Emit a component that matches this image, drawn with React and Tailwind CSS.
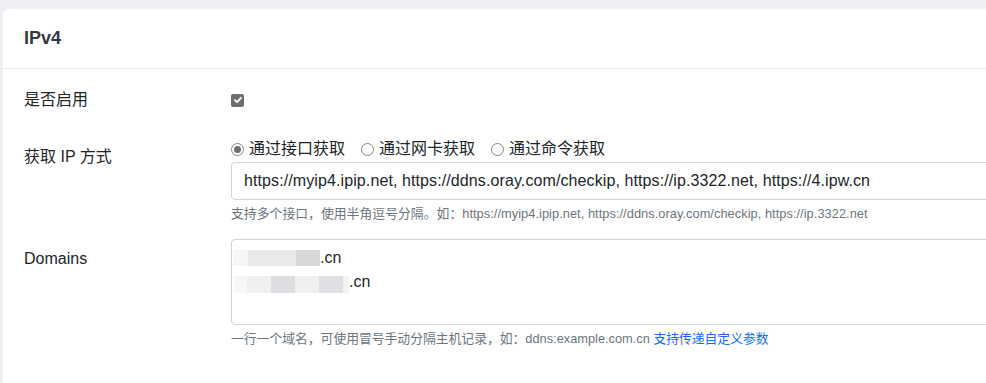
import React from "react";

function Radio({ checked, label }) {
  return (
    <label className="flex items-center">
      <span className="w-[13px] h-[13px] rounded-full border border-[#858585] bg-white flex items-center justify-center">
        {checked && <span className="w-[7px] h-[7px] rounded-full bg-[#6f6f6f]" />}
      </span>
      <span className="ml-[5px]">{label}</span>
    </label>
  );
}

function Block({ w, c }) {
  return <span className={`inline-block h-full ${w} ${c}`} />;
}

export default function App() {
  return (
    <div className="w-[986px] h-[383px] overflow-hidden bg-[#eef0f5] pt-[9px] pl-[3px] font-['Liberation_Sans','Noto_Sans_CJK_SC',sans-serif] text-[16px] text-[#212529]">
      <div className="w-[1200px] h-[400px] bg-white rounded-tl-md">
        <div className="h-[60px] flex items-center px-[21px] border-b border-[#e6e8ee]">
          <span className="text-[18px] font-semibold text-[#343a40]">IPv4</span>
        </div>
        <div className="px-[21px] pt-[11px]">
          {/* Row 1 */}
          <div className="flex">
            <div className="w-[207px] shrink-0 pt-2 leading-6">是否启用</div>
            <div className="pt-2">
              <div className="h-6 flex items-center">
                <span className="w-[13px] h-[13px] rounded-[2px] bg-[#6e6e6e] flex items-center justify-center">
                  <svg width="10" height="10" viewBox="0 0 10 10">
                    <path d="M2 5.2 L4.1 7.2 L8 2.8" fill="none" stroke="white" strokeWidth="1.8" strokeLinecap="round" strokeLinejoin="round" />
                  </svg>
                </span>
              </div>
            </div>
          </div>

          {/* Row 2 */}
          <div className="flex mt-[25px]">
            <div className="w-[207px] shrink-0 pt-2 leading-6">获取 IP 方式</div>
            <div className="flex-1">
              <div className="h-6 flex items-center gap-4 leading-6">
                <Radio checked label="通过接口获取" />
                <Radio label="通过网卡获取" />
                <Radio label="通过命令获取" />
              </div>
              <div className="mt-px h-[38px] border border-[#ced4da] rounded-l-[4px] px-3 leading-[36px] whitespace-nowrap tracking-[0.1px]">
                https://myip4.ipip.net, https://ddns.oray.com/checkip, https://ip.3322.net, https://4.ipw.cn
              </div>
              <div className="mt-1 text-[12.8px] leading-[19px] text-[#6c757d] whitespace-nowrap tracking-[0.05px]">
                支持多个接口，使用半角逗号分隔。如：https://myip4.ipip.net, https://ddns.oray.com/checkip, https://ip.3322.net
              </div>
            </div>
          </div>

          {/* Row 3 */}
          <div className="flex mt-4">
            <div className="w-[207px] shrink-0 pt-2 leading-6">Domains</div>
            <div className="flex-1">
              <div className="h-[86px] border border-[#ced4da] rounded-l-[4px] pt-1.5 pl-px">
                <div className="h-6 flex items-center">
                  <div className="h-4 flex">
                    <Block w="w-[15px]" c="bg-[#f6f6f7]" />
                    <Block w="w-[48px]" c="bg-[#e8e9eb]" />
                    <Block w="w-[24px]" c="bg-[#d6d7d9]" />
                  </div>
                  <span className="leading-6">.cn</span>
                </div>
                <div className="h-6 flex items-center">
                  <div className="h-[17px] flex ml-px mt-[4px]">
                    <Block w="w-[13px]" c="bg-[#f7f7f7]" />
                    <Block w="w-[24px]" c="bg-[#f0f0f1]" />
                    <Block w="w-[24px]" c="bg-[#dcdde0]" />
                    <Block w="w-[24px]" c="bg-[#efeff0]" />
                    <Block w="w-[24px]" c="bg-[#dfe0e3]" />
                    <Block w="w-[6px]" c="bg-[#f3f3f4]" />
                  </div>
                  <span className="leading-6">.cn</span>
                </div>
              </div>
              <div className="mt-1 text-[12.8px] leading-[19px] text-[#6c757d] whitespace-nowrap">
                一行一个域名，可使用冒号手动分隔主机记录，如：ddns:example.com.cn{" "}
                <a className="text-[#0d6efd]">支持传递自定义参数</a>
              </div>
            </div>
          </div>
        </div>
      </div>
    </div>
  );
}
